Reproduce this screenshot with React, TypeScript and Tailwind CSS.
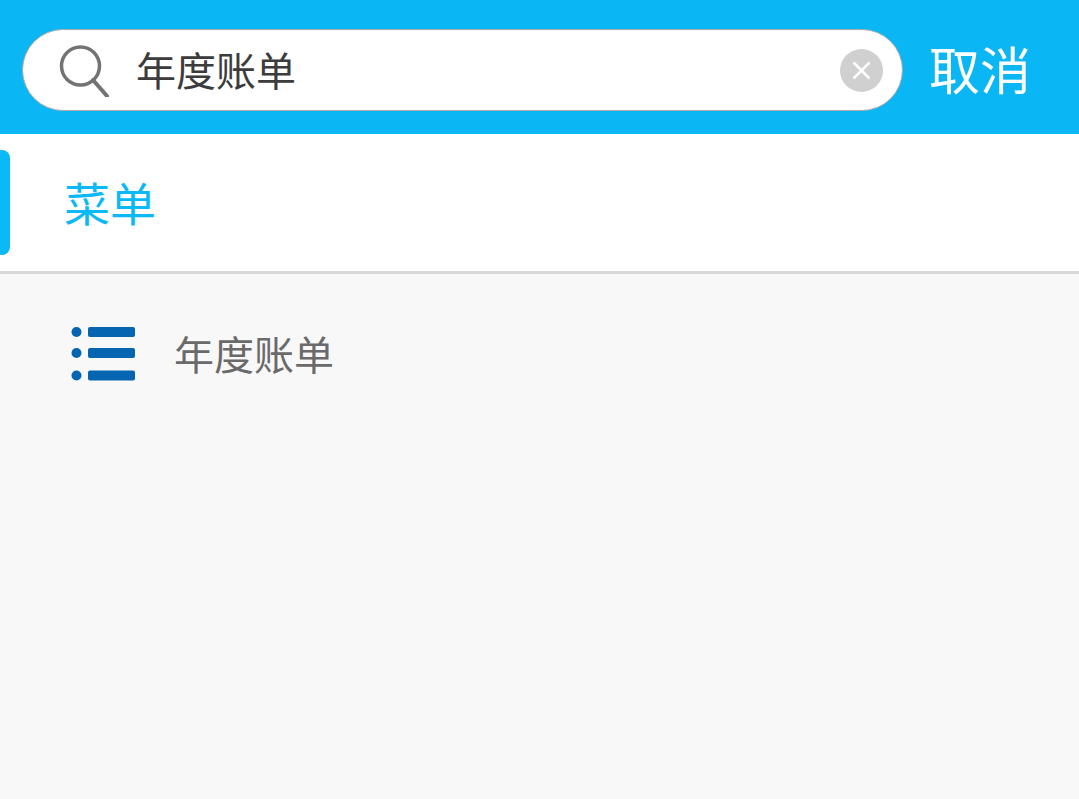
const cjk = { fontFamily: '"Noto Sans CJK SC", "Noto Sans", sans-serif' }

function SearchGlyph() {
  return (
    <svg width="52" height="54" viewBox="0 0 52 54" fill="none" className="shrink-0">
      <circle cx="21.500" cy="23" r="19" stroke="#737373" strokeWidth="3.500" />
      <path d="M34 37 L48 53" stroke="#737373" strokeWidth="4" strokeLinecap="round" />
    </svg>
  )
}

function MenuGlyph() {
  return (
    <svg width="66" height="56" viewBox="0 0 66 56" className="shrink-0">
      <circle cx="6.500" cy="6" r="5" fill="#0565b0" />
      <circle cx="6.500" cy="27" r="5" fill="#0565b0" />
      <circle cx="6.500" cy="49.500" r="5" fill="#0565b0" />
      <rect x="18" y="1" width="47" height="10" rx="2" fill="#0565b0" />
      <rect x="18" y="22" width="47" height="10" rx="2" fill="#0565b0" />
      <rect x="18" y="44.500" width="47" height="10" rx="2" fill="#0565b0" />
    </svg>
  )
}

export default function App() {
  return (
    <div className="flex h-[799px] w-full flex-col overflow-hidden bg-[#f8f8f8]" style={cjk}>
      <header className="flex h-[134px] shrink-0 items-center bg-[#0bb6f5] pl-[22px] pt-[6px]">
        <div className="flex h-[82px] w-[881px] items-center rounded-full border border-[#a9a9a9] bg-white pl-[36px] pr-[19px]">
          <SearchGlyph />
          <span className="mb-[3px] ml-[25px] flex-1 text-[40px] leading-none text-[#3c3c3c]">年度账单</span>
          <button className="flex h-[43px] w-[43px] items-center justify-center rounded-full bg-[#d0d0d0]">
            <svg width="21" height="21" viewBox="0 0 21 21" fill="none">
              <path d="M2.500 2.500 L18.500 18.500 M18.500 2.500 L2.500 18.500" stroke="#fff" strokeWidth="2.500" />
            </svg>
          </button>
        </div>
        <span className="mb-[3px] ml-[26px] text-[51px] leading-none text-white">取消</span>
      </header>

      <div className="flex h-[137px] shrink-0 items-center bg-white">
        <div className="h-[105px] w-[10px] rounded-r-[8px] bg-[#0bb9f6]" />
        <span className="mb-[4px] ml-[54px] text-[46px] leading-none text-[#0bb9f6]">菜单</span>
      </div>
      <div className="h-[3px] shrink-0 bg-[#d9d9d9]" />

      <div className="flex items-center pl-[70px] pt-[52px]">
        <MenuGlyph />
        <span className="mb-[2px] ml-[38px] text-[40px] leading-none text-[#6a6a6a]">年度账单</span>
      </div>
    </div>
  )
}
